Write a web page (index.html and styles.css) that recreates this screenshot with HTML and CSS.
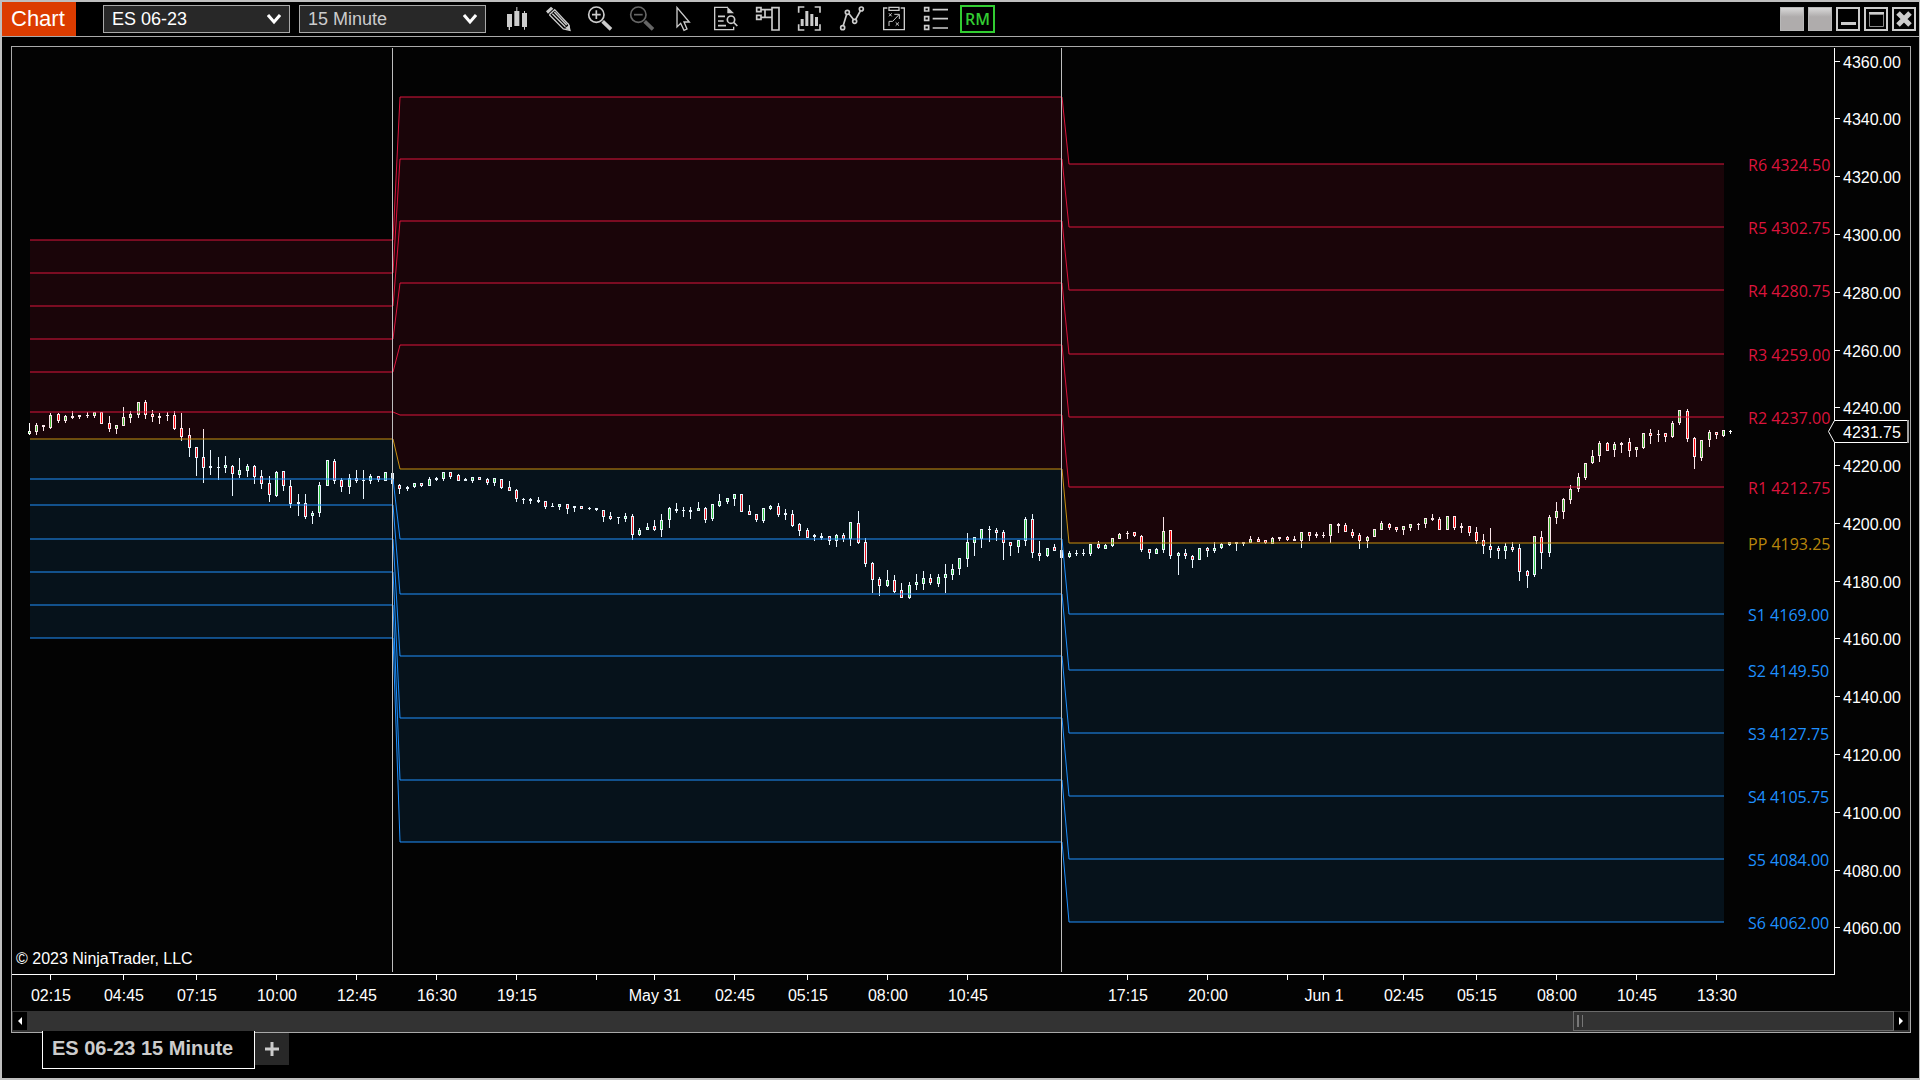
FILE: index.html
```html
<!DOCTYPE html>
<html lang="en">
<head>
<meta charset="utf-8">
<title>Chart - ES 06-23 15 Minute</title>
<link rel="stylesheet" href="styles.css">
</head>
<body>
<div class="window">
  <header class="titlebar">
    <h1 class="title">Chart</h1>
    <div class="pickers">
      <div class="picker">
        <select class="picker-select" aria-label="Instrument"><option>ES 06-23</option></select>
        <svg class="picker-arrow" viewBox="0 0 14 12"><path d="M1 2 L7 9 L13 2"/></svg>
      </div>
      <div class="picker">
        <select class="picker-select picker-dim" aria-label="Interval"><option>15 Minute</option></select>
        <svg class="picker-arrow" viewBox="0 0 14 12"><path d="M1 2 L7 9 L13 2"/></svg>
      </div>
    </div>
    <div class="tools">
      <button class="tool" aria-label="Chart style"><svg viewBox="39 15 84 84"><path class="solid" d="M51 42h15v39h-6v9h-4v-9h-5zM73 33h6v-12h3v12h6v45h-15zM96 39h6v-6h3v6h6v42h-6v8h-3v-8h-6z"/></svg></button>
      <button class="tool" aria-label="Drawing tools"><svg viewBox="165 15 84 84"><path class="solid" d="M168 34L183 20L190 26L174 41zM225 84L239 74L240 92z"/><path d="M178 44L194 29L234 72M178 44L220 87L240 91L235 71M187 41L226 80M193 36L230 75"/></svg></button>
      <button class="tool" aria-label="Zoom in"><svg viewBox="291 15 84 84"><circle class="mid" cx="319" cy="44" r="23"/><path class="mid" d="M319 31v26M306 44h26"/><path class="thick" d="M338 64L363 88"/></svg></button>
      <button class="tool tool-off" aria-label="Zoom out"><svg viewBox="417 15 84 84"><circle class="mid" cx="445" cy="44" r="23"/><path class="mid" d="M432 44h26"/><path class="thick" d="M464 64L489 88"/></svg></button>
      <button class="tool" aria-label="Pointer"><svg viewBox="543 15 84 84"><path d="M561 23V81L572 70L582 91L591 87L582 66H598z"/></svg></button>
      <button class="tool" aria-label="Data box"><svg viewBox="669 15 84 84"><path d="M714 22H674V89H731V80"/><path class="solid" d="M712 20L732 40H712z"/><path class="mid" d="M684 49h21M684 63h17M684 77h24"/><circle class="mid" cx="723" cy="59" r="11"/><path class="mid" d="M731 67L742 78"/></svg></button>
      <button class="tool" aria-label="Chart trader"><svg viewBox="795 15 84 84"><path class="mid" d="M846 23h21v67h-21zM800 23h13v12h-13zM800 46h13v12h-13zM813 29h31M813 52h12v-21M825 52h19"/></svg></button>
      <button class="tool" aria-label="Indicators"><svg viewBox="921 15 84 84"><path class="mid" d="M926 38V21H943M974 21H990V38M926 73V90H943M974 90H990V73"/><path class="solid" d="M932 57h9v21h-9zM946 33h9v45h-9zM961 42h9v36h-9zM975 51h9v27h-9z"/></svg></button>
      <button class="tool" aria-label="Strategies"><svg viewBox="1047 15 84 84"><path class="mid" d="M1060 76L1070 43M1077 41L1091 59M1097 58L1111 33"/><circle class="mid" cx="1058" cy="83" r="6"/><circle class="mid" cx="1072" cy="37" r="6"/><circle class="mid" cx="1094" cy="64" r="6"/><circle class="mid" cx="1114" cy="27" r="6"/></svg></button>
      <button class="tool" aria-label="Playbook"><svg viewBox="1173 15 84 84"><path d="M1192 24H1181V89H1243V24H1232M1197 22h30v9h-30z"/><path class="fine" d="M1197 40l8 9M1205 40l-8 9M1217 67l10 10M1227 67l-10 10M1197 78V64H1208L1227 44M1213 43H1228V57"/></svg></button>
      <button class="tool" aria-label="Properties"><svg viewBox="1299 15 84 84"><path class="mid" d="M1304 23h12v10h-12zM1304 50h12v11h-12zM1304 77h12v11h-12zM1328 29h46M1328 56h46M1328 84h46"/></svg></button>
      <button class="rm">RM</button>
    </div>
    <div class="controls">
      <button class="link-box" aria-label="Instrument link"></button>
      <button class="link-box" aria-label="Interval link"></button>
      <button class="control" aria-label="Minimize"><svg viewBox="0 0 20 20"><path class="solid" d="M3 13h15v3H3z"/></svg></button>
      <button class="control" aria-label="Maximize"><svg viewBox="0 0 20 20"><path class="solid" d="M3 3h15v3H3z"/><path class="thin" d="M3.500 5.500h14v12h-14z"/></svg></button>
      <button class="control" aria-label="Close"><svg viewBox="0 0 20 20"><path class="cross" d="M4 4L16 16M16 4L4 16"/></svg></button>
    </div>
  </header>

  <main class="panel">
    <svg id="chart" class="chart" viewBox="12 47 1898 964" role="img" aria-label="ES 06-23 15 minute price chart"></svg>
    <div class="scrollbar">
      <button class="scroll-button" aria-label="Scroll left"><svg viewBox="0 0 6 10"><path class="solid" d="M5 1V9L1 5z"/></svg></button>
      <div class="scroll-track"><div class="scroll-thumb"></div></div>
      <button class="scroll-button" aria-label="Scroll right"><svg viewBox="0 0 6 10"><path class="solid" d="M1 1V9L5 5z"/></svg></button>
    </div>
  </main>

  <nav class="tabs">
    <button class="tab">ES 06-23 15 Minute</button>
    <button class="tab-add" aria-label="Add tab"><svg viewBox="0 0 16 16"><path d="M8 1V15M1 8H15"/></svg></button>
  </nav>
</div>
<script src="chart.js"></script>
</body>
</html>
```
FILE: styles.css
```css
* { box-sizing: border-box; }

body {
  margin: 0;
  background: #000;
  color: #fff;
  font-family: "Liberation Sans", Arial, sans-serif;
}

button { padding: 0; border: 0; background: none; color: inherit; font: inherit; }

.window {
  display: flex;
  flex-direction: column;
  min-height: 100vh;
  border: 2px solid #bfbfbf;
  border-right-width: 1px;
  background: #000;
}

/* Title bar */
.titlebar {
  display: flex;
  align-items: center;
  height: 35px;
  padding-right: 3px;
  border-bottom: 1px solid #a9a9a9;
}
.title {
  align-self: stretch;
  width: 74px;
  margin: 0;
  padding-left: 9px;
  background: #dc3c00;
  font-size: 22px;
  font-weight: 400;
  line-height: 34px;
}
.pickers { display: flex; gap: 9px; margin-left: 27px; }
.picker { display: grid; width: 187px; height: 28px; }
.picker-select {
  grid-area: 1 / 1;
  appearance: none;
  padding: 0 8px;
  border: 1px solid #a9a9a9;
  border-radius: 0;
  background: #282828;
  color: #fff;
  font: 18px/26px "Liberation Sans", Arial, sans-serif;
}
.picker-dim { color: #ccc; }
.picker-arrow {
  grid-area: 1 / 1;
  place-self: center end;
  width: 14px;
  height: 12px;
  margin-right: 9px;
  fill: none;
  stroke: #fff;
  stroke-width: 3;
  pointer-events: none;
}

.tools { display: flex; align-items: center; margin-left: 10px; }
.tool { display: flex; justify-content: center; width: 42px; height: 28px; }
.tool svg {
  width: 28px;
  height: 28px;
  fill: none;
  stroke: #ccc;
  stroke-width: 4;
}
.tool .solid, .control .solid, .scroll-button .solid { fill: #ccc; stroke: none; }
.tool .fine { stroke-width: 3; }
.tool .mid { stroke-width: 5; }
.tool .thick { stroke-width: 11; }
.tool-off svg { stroke: #666; }
.rm {
  width: 35px;
  height: 28px;
  margin-left: 2px;
  border: 2px solid #32cd32;
  color: #32cd32;
  font: 600 16px/24px "Open Sans", "Noto Sans", sans-serif;
  text-align: center;
}

.controls { display: flex; gap: 4px; margin-left: auto; }
.link-box {
  width: 24px;
  height: 24px;
  border: 1px solid #b8b8b8;
  background: linear-gradient(#d8d8d8, #afacac 40%);
}
.control { width: 24px; height: 24px; border: 2px solid #ccc; }
.control svg { display: block; width: 20px; height: 20px; fill: none; }
.control .thin { stroke: #888; stroke-width: 1; }
.control .cross { stroke: #ccc; stroke-width: 5; }

/* Chart panel */
.panel { margin: 9px 8px 0 9px; border: 1px solid #a9a9a9; background: #030303; }
.chart { display: block; width: 100%; height: auto; }
.chart text { font-family: "Liberation Sans", Arial, sans-serif; font-size: 16px; fill: #fff; }
.chart .level-label { font-family: "Open Sans", "Noto Sans", sans-serif; }
.chart .level-label.up { fill: #dc143c; }
.chart .level-label.pivot { fill: #b8860b; }
.chart .level-label.down { fill: #1e90ff; }
.chart .mid-label { text-anchor: middle; }
.band { stroke: none; }
.band.up { fill: rgba(220, 24, 68, 0.11); }
.band.down { fill: rgba(43, 153, 243, 0.1); }
.level { fill: none; stroke-width: 1; }
.level.up { stroke: #dc143c; }
.level.pivot { stroke: #c8900f; }
.level.down { stroke: #1e90ff; }
.crisp { shape-rendering: crispEdges; }
.white { fill: #fff; }
.rise { fill: #32cd32; }
.fall { fill: #f00; }
.session { fill: #bebebe; }
.marker { fill: #000; stroke: #fff; stroke-width: 1; }
.marker-shade { fill: #a0a0a0; }

/* Scroll bar */
.scrollbar {
  display: flex;
  height: 21px;
  padding: 0 2px 1px 1px;
  background: #333;
}
.scroll-button { width: 14px; margin: 1px 0; background: #000; }
.scroll-button svg { display: block; width: 6px; height: 10px; margin: 0 auto; }
.scroll-button .solid { fill: #fff; }
.scroll-track { flex: 1; display: flex; justify-content: flex-end; }
.scroll-thumb {
  width: 17.2%;
  border: 1px solid #6a6a6a;
  background:
    linear-gradient(#777, #777) 3px 3px / 2px 12px no-repeat,
    linear-gradient(#777, #777) 8px 3px / 1px 12px no-repeat,
    #333;
}

/* Tabs */
.tabs { display: flex; align-items: flex-start; margin: -2px 0 0 40px; position: relative; }
.tab {
  width: 213px;
  height: 38px;
  padding: 0 9px 2px;
  border: 1px solid #fff;
  border-top: 0;
  background: #000;
  color: #ccc;
  font-size: 20px;
  font-weight: 700;
  text-align: left;
}
.tab-add { display: grid; place-items: center; width: 34px; height: 32px; margin-top: 2px; background: #282828; }
.tab-add svg { width: 16px; height: 16px; stroke: #ccc; stroke-width: 3; }
```
FILE: chart.js
```js
(function () {
  var NS = 'http://www.w3.org/2000/svg';
  var chart = document.getElementById('chart');

  function add(name, attrs, text) {
    var el = document.createElementNS(NS, name);
    for (var k in attrs) el.setAttribute(k, attrs[k]);
    if (text !== undefined) el.textContent = text;
    chart.appendChild(el);
    return el;
  }
  function box(x, y, w, h, cls) {
    add('rect', { x: x, y: y, width: w, height: h, 'class': cls + ' crisp' });
  }

  // One bar per entry: wick top, body top, body bottom, wick bottom, direction
  var bars = (
    '423 431 434 435 g,423 425 432 435 g,425 425 427 431 n,413 415 428 429 g,413 414 421 423 r,415 416 421 423 g,' +
    '411 416 418 419 n,415 415 417 419 n,412 415 416 418 n,412 412 416 418 g,412 412 424 424 r,416 423 429 432 r,' +
    '425 425 429 434 g,407 417 426 426 g,411 414 418 423 g,402 402 415 418 g,400 402 415 419 r,410 414 417 422 r,' +
    '413 416 418 424 n,412 415 416 421 n,411 415 429 430 r,413 428 437 441 r,428 435 448 457 r,447 447 458 476 r,' +
    '429 457 468 483 r,450 466 468 475 n,457 467 468 480 n,456 465 468 473 g,465 466 474 496 r,458 470 475 478 g,' +
    '464 466 471 477 g,465 466 477 484 r,470 476 484 489 r,476 483 495 502 r,471 472 496 497 g,471 471 486 491 r,' +
    '480 486 504 508 r,494 502 504 516 n,494 503 517 519 r,511 513 516 524 g,482 485 513 517 g,460 460 486 486 g,' +
    '459 461 481 484 r,478 480 487 492 r,474 478 487 494 g,470 478 481 483 r,470 480 481 499 n,474 476 481 484 g,' +
    '476 476 480 482 r,472 472 481 481 g,473 473 484 484 r,484 485 489 494 r,486 487 489 491 n,483 483 487 488 g,' +
    '483 483 486 487 r,477 479 486 486 g,477 478 480 481 n,472 472 479 481 g,472 472 477 479 r,474 475 481 481 r,' +
    '478 479 481 481 n,477 477 481 483 g,477 477 480 480 r,478 479 483 485 r,478 478 483 486 g,479 479 488 489 r,' +
    '481 487 491 491 r,489 490 499 502 r,498 499 500 504 n,498 499 501 504 n,497 500 502 503 n,501 501 507 509 r,' +
    '503 506 507 507 n,504 504 507 510 g,504 504 509 514 r,506 506 508 512 n,506 506 509 509 r,507 508 509 510 n,' +
    '508 508 510 511 n,510 510 517 522 r,512 516 519 520 r,517 517 518 524 n,513 516 519 522 g,514 516 535 540 r,' +
    '528 530 535 536 g,523 527 530 530 g,520 526 530 531 r,514 520 530 537 g,507 508 520 528 g,503 509 511 513 n,' +
    '507 510 511 517 n,507 510 512 519 n,502 508 511 511 g,507 508 520 523 r,504 504 519 521 g,494 501 506 507 g,' +
    '498 498 502 504 g,494 494 499 506 g,494 494 512 512 r,505 511 515 515 r,514 514 520 522 r,508 508 521 523 g,' +
    '505 506 509 510 g,503 506 515 517 r,509 513 515 520 n,510 514 526 527 r,523 524 531 536 r,528 530 538 538 r,' +
    '534 535 537 541 n,533 536 538 540 n,536 536 541 545 r,534 535 541 547 g,533 535 539 542 r,522 522 539 546 g,' +
    '511 523 543 544 r,538 542 564 567 r,562 563 580 593 r,577 579 586 596 r,570 580 586 587 g,575 580 592 593 r,' +
    '583 590 598 598 r,582 585 598 599 g,574 582 585 590 g,571 578 584 590 g,574 578 583 585 r,574 577 584 587 g,' +
    '564 574 578 593 g,564 569 575 580 g,558 558 569 575 g,533 542 559 567 g,537 537 543 556 g,529 529 539 548 g,' +
    '526 529 530 542 n,528 530 533 541 r,530 532 543 560 r,542 542 546 556 r,540 540 547 553 g,517 519 541 546 g,' +
    '514 519 553 558 r,541 553 556 561 r,548 548 556 557 g,544 547 551 551 r,548 550 558 559 r,551 553 557 558 g,' +
    '550 553 554 556 n,549 553 554 556 n,544 544 554 556 g,541 544 548 549 r,544 545 549 549 g,538 538 546 547 g,' +
    '533 534 539 539 g,531 533 534 539 n,532 532 536 537 r,535 536 550 552 r,549 549 553 559 r,548 549 554 554 g,' +
    '517 531 550 553 g,530 530 556 559 r,552 553 556 575 g,549 553 556 559 r,555 556 560 568 r,548 548 560 560 g,' +
    '547 548 551 557 r,542 548 551 553 g,543 544 548 549 g,542 542 545 546 g,542 542 544 551 n,542 542 544 546 n,' +
    '536 539 543 543 g,537 539 542 542 r,540 540 543 544 r,537 538 544 544 g,537 537 539 541 n,536 537 540 541 r,' +
    '536 539 541 541 n,532 532 541 548 g,532 532 536 541 r,532 534 536 538 n,532 535 536 538 n,524 524 536 543 g,' +
    '523 524 526 533 n,523 525 532 532 r,529 532 536 538 r,533 535 541 549 r,536 537 541 548 g,529 529 537 537 g,' +
    '521 523 530 530 g,523 524 528 530 r,527 527 530 532 r,526 526 530 535 g,524 524 528 531 g,523 524 525 530 n,' +
    '518 518 524 528 g,514 518 520 521 n,517 519 530 530 r,516 516 530 530 g,516 516 528 530 r,523 526 528 533 n,' +
    '526 526 533 536 r,527 532 541 544 r,534 540 546 554 r,528 546 550 558 r,546 548 551 559 r,543 546 551 559 g,' +
    '542 547 550 552 r,544 548 572 581 r,570 571 576 588 r,536 536 575 577 g,531 537 553 569 r,515 517 553 557 g,' +
    '502 511 518 524 g,498 499 512 519 g,485 489 500 504 g,473 477 489 492 g,463 463 478 480 g,450 456 463 464 g,' +
    '441 443 456 462 g,442 443 451 451 r,442 444 450 457 g,442 443 445 453 n,438 442 451 457 r,447 447 450 457 g,' +
    '433 433 448 449 g,429 433 436 444 r,430 434 435 442 n,433 433 437 442 r,421 423 437 438 g,410 410 423 425 g,' +
    '409 411 439 442 r,437 438 457 469 r,440 440 458 461 g,430 432 440 447 g,432 432 435 439 r,430 430 436 437 g,' +
    '430 431 432 434 n'
  ).split(',');

  var colours = { g: 'rise', r: 'fall' };
  bars.forEach(function (bar, i) {
    var v = bar.split(' ');
    var x = Math.floor(29 + i * 80 / 11);
    var top = +v[1], bottom = +v[2];
    box(x, +v[0], 1, v[3] - v[0], 'white');
    box(x - 1, top, 3, bottom - top, 'white');
    if (colours[v[4]]) box(x, top + 1, 1, bottom - top - 2, colours[v[4]]);
  });

  // Pivot levels R6..R1, PP, S1..S6 for the three sessions
  var levels = [
    [240, 97, 164], [273, 159, 227], [306, 221, 290], [339, 283, 354], [372, 345, 417], [412, 415, 487],
    [439, 469, 543],
    [479, 539, 614], [505, 594, 670], [539, 656, 733], [572, 718, 796], [605, 780, 859], [638, 842, 922]
  ];
  function path(l) {
    return [[30, l[0]], [393, l[0]], [400, l[1]], [1062, l[1]], [1069, l[2]], [1724, l[2]]];
  }
  function band(a, b, cls) {
    add('polygon', { points: path(a).concat(path(b).reverse()).join(' '), 'class': 'band ' + cls });
  }
  band(levels[0], levels[6], 'up');
  band(levels[6], levels[12], 'down');
  levels.forEach(function (l, i) {
    var cls = i < 6 ? 'up' : i === 6 ? 'pivot' : 'down';
    add('polyline', { points: path(l).join(' '), 'class': 'level ' + cls });
  });

  box(392, 48, 1, 924, 'session');
  box(1061, 48, 1, 924, 'session');

  var names = ['R6 4324.50', 'R5 4302.75', 'R4 4280.75', 'R3 4259.00', 'R2 4237.00', 'R1 4212.75', 'PP 4193.25',
    'S1 4169.00', 'S2 4149.50', 'S3 4127.75', 'S4 4105.75', 'S5 4084.00', 'S6 4062.00'];
  names.forEach(function (name, i) {
    var cls = i < 6 ? 'up' : i === 6 ? 'pivot' : 'down';
    add('text', { x: 1748, y: levels[i][2] + 7, 'class': 'level-label ' + cls }, name);
  });

  // Price axis
  box(1834, 48, 1, 927, 'white');
  for (var price = 4360; price >= 4060; price -= 20) {
    var y = Math.floor(61.1 + (4360 - price) * 2.889);
    box(1835, y, 5, 1, 'white');
    add('text', { x: 1843, y: y + 7 }, price.toFixed(2));
  }
  add('polygon', { points: '1828.5,431.5 1834.5,420.5 1908.5,420.5 1908.5,442.5 1834.5,442.5', 'class': 'marker' });
  box(1907, 420, 2, 23, 'marker-shade');
  add('text', { x: 1843, y: 438 }, '4231.75');

  // Time axis
  box(12, 974, 1823, 1, 'white');
  [[50, '02:15'], [123, '04:45'], [196, '07:15'], [276, '10:00'], [356, '12:45'], [436, '16:30'], [516, '19:15'],
    [596, ''], [654, 'May 31'], [734, '02:45'], [807, '05:15'], [887, '08:00'], [967, '10:45'], [1127, '17:15'],
    [1207, '20:00'], [1287, ''], [1323, 'Jun 1'], [1403, '02:45'], [1476, '05:15'], [1556, '08:00'],
    [1636, '10:45'], [1716, '13:30']].forEach(function (t) {
    box(t[0], 975, 1, 5, 'white');
    if (t[1]) add('text', { x: t[0] + 1, y: 1001, 'class': 'mid-label' }, t[1]);
  });

  add('text', { x: 16, y: 964 }, '\u00a9 2023 NinjaTrader, LLC');
})();
```
